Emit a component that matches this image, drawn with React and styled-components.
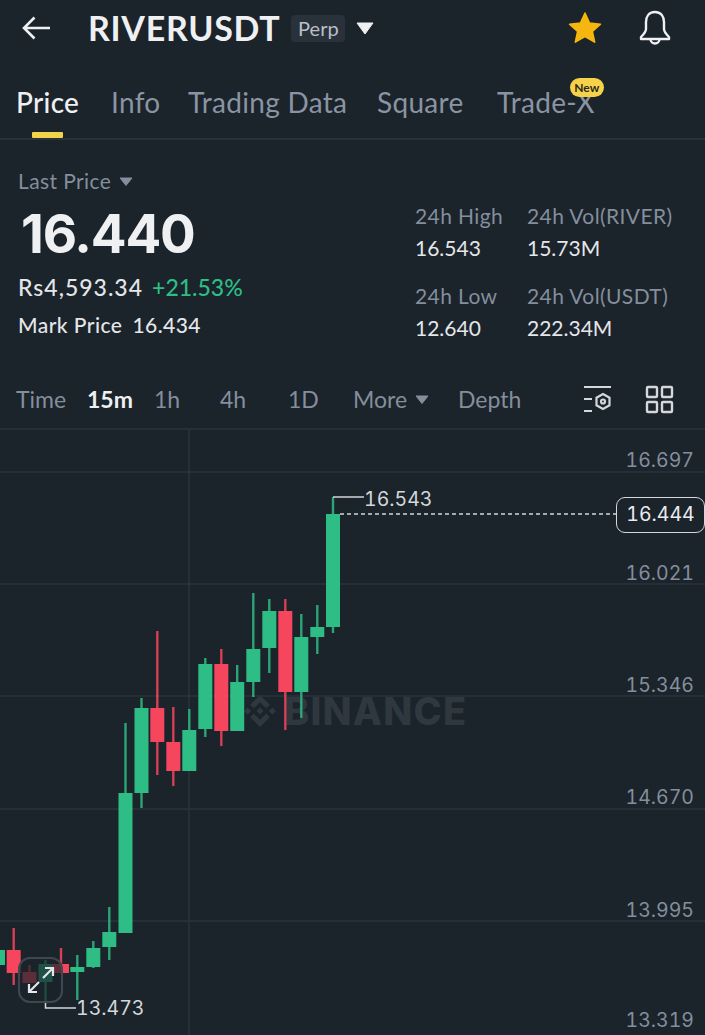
import React from "react";
import styled, { createGlobalStyle } from "styled-components";

const Global = createGlobalStyle`
  html, body { margin: 0; padding: 0; background: #1b232b; }
  body { font-family: "Lato", "Liberation Sans", sans-serif; color: #e9ebee; }
  * { box-sizing: border-box; }
`;

const Page = styled.div`
  width: 705px;
  height: 1035px;
  overflow: hidden;
  background: #1b232b;
  display: flex;
  flex-direction: column;
`;

const Header = styled.header`
  height: 56px;
  display: flex;
  align-items: center;
  padding: 0 33px 0 22px;
`;
const Title = styled.h1`
  margin: 0 11px 0 38px;
  font-size: 34px;
  line-height: 40px;
  font-weight: 700;
  letter-spacing: 0.7px;
  color: #eef0f2;
`;
const Badge = styled.span`
  width: 54px;
  height: 27px;
  border-radius: 4px;
  background: #29313a;
  color: #b9bfc7;
  font-size: 20px;
  display: flex;
  align-items: center;
  justify-content: center;
`;
const HeaderCaret = styled.svg`
  margin-left: 11px;
  flex: none;
`;
const HeaderIcons = styled.div`
  margin-left: auto;
  display: flex;
  align-items: center;
  gap: 35px;
`;

const Tabs = styled.nav`
  height: 84px;
  padding: 28px 0 0 16px;
  display: grid;
  grid-template-columns: 95px 77px 189px 120px auto;
  align-items: start;
  justify-content: start;
  border-bottom: 2px solid #29313a;
`;
const Tab = styled.span`
  position: relative;
  display: block;
  font-size: 28px;
  line-height: 36px;
  font-weight: ${(p) => (p.$active ? 500 : 400)};
  color: ${(p) => (p.$active ? "#eef0f2" : "#8a94a2")};
  letter-spacing: 0.3px;
  white-space: nowrap;
`;
const Underline = styled.i`
  position: absolute;
  left: 16px;
  top: 48px;
  width: 31px;
  height: 6px;
  border-radius: 1px;
  background: #f3d34a;
`;
const NewBadge = styled.span`
  position: absolute;
  right: -9px;
  top: -6px;
  width: 34px;
  height: 19px;
  border-radius: 10px;
  background: #f6d24a;
  color: #2a2a1e;
  font-size: 12px;
  line-height: 19px;
  font-weight: 700;
  text-align: center;
  letter-spacing: 0;
`;

const Stats = styled.section`
  height: 230px;
  padding: 27px 0 0 18px;
  display: flex;
`;
const LeftStats = styled.div`
  width: 397px;
  display: flex;
  flex-direction: column;
`;
const LastPrice = styled.div`
  display: flex;
  align-items: center;
  gap: 8px;
  color: #848e9c;
  font-size: 21px;
  line-height: 28px;
  letter-spacing: 0.4px;
`;
const BigPrice = styled.div`
  margin: 10px 0 0 3px;
  font-size: 53px;
  line-height: 58px;
  font-weight: 700;
  font-family: "Inter", "Liberation Sans", sans-serif;
  letter-spacing: -1.2px;
  color: #eef0f2;
`;
const FiatRow = styled.div`
  margin-top: 9px;
  display: flex;
  gap: 9px;
  font-size: 23px;
  line-height: 30px;
  font-weight: 500;
  color: #e4e6e9;
`;
const Fiat = styled.span`
  letter-spacing: 1px;
`;
const Change = styled.span`
  color: #2ebd85;
`;
const MarkRow = styled.div`
  margin-top: 9px;
  display: flex;
  gap: 10px;
  font-size: 21px;
  line-height: 28px;
  font-weight: 500;
  letter-spacing: 0.45px;
  color: #e4e6e9;
`;
const RightStats = styled.div`
  display: grid;
  grid-template-columns: 112px auto;
  grid-auto-rows: 80px;
  margin-top: 35px;
`;
const StatCell = styled.div`
  display: flex;
  flex-direction: column;
  gap: 4px;
`;
const StatLabel = styled.span`
  font-size: 21px;
  line-height: 28px;
  letter-spacing: 0.4px;
  color: #848e9c;
  white-space: nowrap;
`;
const StatValue = styled.span`
  font-size: 21px;
  line-height: 28px;
  color: #e4e6e9;
  white-space: nowrap;
`;

const TimeBar = styled.div`
  height: 60px;
  display: grid;
  grid-template-columns: 71px 67px 66px 68px 65px 105px 125px 62px auto;
  align-items: center;
  padding: 0 0 0 16px;
  border-bottom: 2px solid #262e37;
`;
const TimeItem = styled.span`
  display: flex;
  align-items: center;
  gap: 8px;
  font-size: 23px;
  line-height: 30px;
  font-weight: ${(p) => (p.$active ? 700 : 400)};
  color: ${(p) => (p.$active ? "#eef0f2" : "#848e9c")};
`;

const Chart = styled.section`
  position: relative;
  flex: 1;
  overflow: hidden;
`;
const ChartSvg = styled.svg`
  position: absolute;
  left: 0;
  top: 0;
`;
const Numeric = styled.span`
  position: absolute;
  font-family: "Inter", "Liberation Sans", sans-serif;
  font-variant-numeric: tabular-nums;
  font-size: 19.5px;
  line-height: 24px;
`;
const AxisLabel = styled(Numeric)`
  right: 11px;
  color: #848e9c;
`;
const PriceTag = styled(Numeric)`
  left: 616px;
  top: 67px;
  width: 89px;
  height: 36px;
  border: 1.5px solid #d4d7db;
  border-radius: 9px;
  background: #1b232b;
  color: #e9ebee;
  line-height: 33px;
  text-align: center;
`;
const Callout = styled(Numeric)`
  color: #d4d7db;
`;
const Watermark = styled.div`
  position: absolute;
  left: 244px;
  top: 258px;
  display: flex;
  align-items: center;
  gap: 8px;
  font-family: "Inter", "Liberation Sans", sans-serif;
  font-size: 38px;
  line-height: 46px;
  font-weight: 800;
  letter-spacing: 1.2px;
  color: #2f373f;
`;
const ExpandButton = styled.button`
  position: absolute;
  left: 18px;
  top: 527px;
  width: 45px;
  height: 46px;
  padding: 0;
  border: 2px solid #3f4750;
  border-radius: 12px;
  background: rgba(27, 35, 43, 0.7);
  display: flex;
  align-items: center;
  justify-content: center;
`;

const UP = "#2ebd85";
const DOWN = "#f6465d";
const TOP = 430;

const candles = [
  [0, 0, 0, 950, 965, UP, -5],
  [13.7, 928, 985, 950, 973, DOWN],
  [29.5, 965, 983, 972, 983, DOWN],
  [45.5, 960, 1002, 964, 982, UP],
  [61, 948, 973, 964, 973, DOWN, 61],
  [77.3, 955, 1000, 967, 972, UP],
  [93.3, 941, 968, 948, 967, UP],
  [109.3, 907, 960, 932, 947, UP],
  [125.5, 723, 933, 793, 933, UP],
  [141.5, 698, 808, 708, 793, UP],
  [157.3, 631, 775, 708, 742, DOWN],
  [173.3, 707, 786, 742, 771, DOWN],
  [189.3, 709, 771, 730, 771, UP],
  [205.3, 658, 737, 664, 729, UP],
  [221.3, 649, 746, 664, 731, DOWN],
  [237.2, 665, 731, 682, 731, UP],
  [253.3, 593, 697, 649, 682, UP],
  [269.3, 599, 673, 611, 648, UP],
  [285.3, 599, 730, 611, 692, DOWN],
  [301.3, 614, 718, 637, 692, UP],
  [317.3, 605, 654, 627, 637, UP],
  [333, 497, 633, 514, 627, UP],
];

const gridY = [472, 584, 696, 809, 921];
const axis = [
  ["16.697", 460],
  ["16.021", 573],
  ["15.346", 685],
  ["14.670", 797],
  ["13.995", 910],
  ["13.319", 1020],
];
const stats = [
  ["24h High", "16.543"],
  ["24h Vol(RIVER)", "15.73M"],
  ["24h Low", "12.640"],
  ["24h Vol(USDT)", "222.34M"],
];
const times = ["Time", "15m", "1h", "4h", "1D"];

const Caret = ({ w = 14, h = 9, color = "#848e9c" }) => (
  <svg width={w} height={h} viewBox="0 0 14 9">
    <path d="M1 1h12L7 8.500z" fill={color} stroke={color} strokeLinejoin="round" />
  </svg>
);

export default function App() {
  return (
    <Page>
      <Global />
      <Header>
        <svg width="28" height="24" viewBox="0 0 28 24" fill="none" stroke="#eef0f2" strokeWidth="2.600">
          <path d="M28 12H2M12.500 1.500 2 12l10.500 10.500" />
        </svg>
        <Title>RIVERUSDT</Title>
        <Badge>Perp</Badge>
        <HeaderCaret width="18" height="13" viewBox="0 0 18 13">
          <path d="M1 1h16L9 12z" fill="#eef0f2" stroke="#eef0f2" strokeLinejoin="round" />
        </HeaderCaret>
        <HeaderIcons>
          <svg width="36" height="36" viewBox="0 0 36 36">
            <path
              d="M18 3l4.600 10 10.900 1.200-8.100 7.300 2.300 10.700L18 26.700 8.300 32.200l2.300-10.700-8.100-7.300L13.400 13z"
              fill="#f5b70f"
              stroke="#f5b70f"
              strokeWidth="1.500"
              strokeLinejoin="round"
            />
          </svg>
          <svg width="34" height="36" viewBox="0 0 34 36" fill="none" stroke="#eef0f2" strokeWidth="2.400" strokeLinejoin="round">
            <path d="M17 2C10.500 2 8 7 8 12v7c0 3-2 5-5 8v2h28v-2c-3-3-5-5-5-8v-7c0-5-2.500-10-9-10z" />
            <path d="M12.500 29a4.500 4.500 0 0 0 9 0" />
          </svg>
        </HeaderIcons>
      </Header>

      <Tabs>
        <Tab $active>
          Price
          <Underline />
        </Tab>
        <Tab>Info</Tab>
        <Tab>Trading Data</Tab>
        <Tab>Square</Tab>
        <Tab>
          Trade-X
          <NewBadge>New</NewBadge>
        </Tab>
      </Tabs>

      <Stats>
        <LeftStats>
          <LastPrice>
            Last Price <Caret />
          </LastPrice>
          <BigPrice>16.440</BigPrice>
          <FiatRow>
            <Fiat>Rs4,593.34</Fiat>
            <Change>+21.53%</Change>
          </FiatRow>
          <MarkRow>
            <span>Mark Price</span>
            <span>16.434</span>
          </MarkRow>
        </LeftStats>
        <RightStats>
          {stats.map(([label, value]) => (
            <StatCell key={label}>
              <StatLabel>{label}</StatLabel>
              <StatValue>{value}</StatValue>
            </StatCell>
          ))}
        </RightStats>
      </Stats>

      <TimeBar>
        {times.map((t) => (
          <TimeItem key={t} $active={t === "15m"}>
            {t}
          </TimeItem>
        ))}
        <TimeItem>
          More <Caret />
        </TimeItem>
        <TimeItem>Depth</TimeItem>
        <svg width="29" height="29" viewBox="0 0 29 29" fill="none" stroke="#d4d7db" strokeWidth="2.200">
          <path d="M1 2h27M1 14h8M1 26h8" />
          <path d="M20 9l6.500 3.700v7.600L20 24l-6.500-3.700v-7.600z" />
          <circle cx="20" cy="16.500" r="2" />
        </svg>
        <svg width="29" height="29" viewBox="0 0 29 29" fill="none" stroke="#d4d7db" strokeWidth="2.400">
          <rect x="2" y="2" width="10" height="10" rx="1" />
          <rect x="17" y="2" width="10" height="10" rx="1" />
          <rect x="2" y="17" width="10" height="10" rx="1" />
          <rect x="17" y="17" width="10" height="10" rx="1" />
        </svg>
      </TimeBar>

      <Chart>
        <Watermark>
          <svg width="32" height="32" viewBox="0 0 24 24" fill="#2f373f">
            <path d="M16.624 13.920l2.718 2.715-7.353 7.353-7.353-7.352 2.718-2.716 4.635 4.659 4.636-4.659zm4.637-4.637L24 12l-2.715 2.716L18.568 12l2.693-2.716zm-9.272.001l2.716 2.691-2.716 2.717L9.272 12l2.717-2.715zm-9.272-.001L5.409 12l-2.691 2.692L0 12l2.716-2.716zM11.989.012l7.353 7.329-2.718 2.715-4.635-4.635-4.636 4.659-2.717-2.715 7.353-7.353z" />
          </svg>
          BINANCE
        </Watermark>

        <ChartSvg width="705" height="605" viewBox={`0 ${TOP} 705 605`}>
          {gridY.map((y) => (
            <line key={y} x1="0" x2="705" y1={y} y2={y} stroke="#2b333c" strokeWidth="1.500" />
          ))}
          <line x1="189" x2="189" y1={TOP} y2="1035" stroke="#2b333c" strokeWidth="1.500" />
          {candles.map(([x, wt, wb, bt, bb, color], i) => {
            const isEdge = i === 0;
            const left = i === 4 ? 52 : isEdge ? 0 : x - 7;
            const width = i === 4 ? 17 : isEdge ? 5 : 14;
            return (
              <g key={i}>
                {!isEdge && <line x1={x} x2={x} y1={wt} y2={wb} stroke={color} strokeWidth="2.400" opacity="0.85" />}
                <rect x={left} y={bt} width={width} height={bb - bt} fill={color} />
              </g>
            );
          })}
          <path d="M333 497h31" fill="none" stroke="#d4d7db" strokeWidth="1.500" />
          <path d="M340 514H616" fill="none" stroke="#d4d7db" strokeWidth="1.500" strokeDasharray="4 3" />
          <path d="M45.500 1002v6H76" fill="none" stroke="#d4d7db" strokeWidth="1.500" />
        </ChartSvg>

        {axis.map(([label, y]) => (
          <AxisLabel key={label} style={{ top: y - TOP - 12 }}>
            {label}
          </AxisLabel>
        ))}
        <PriceTag>16.444</PriceTag>
        <Callout style={{ left: 364, top: 57 }}>16.543</Callout>
        <Callout style={{ left: 76, top: 566 }}>13.473</Callout>

        <ExpandButton aria-label="Expand">
          <svg width="28" height="28" viewBox="0 0 28 28" fill="none" stroke="#e4e6e9" strokeWidth="2.200">
            <path d="M16 12 26 2M18 2h8v8M12 16 2 26M2 18v8h8" />
          </svg>
        </ExpandButton>
      </Chart>
    </Page>
  );
}
